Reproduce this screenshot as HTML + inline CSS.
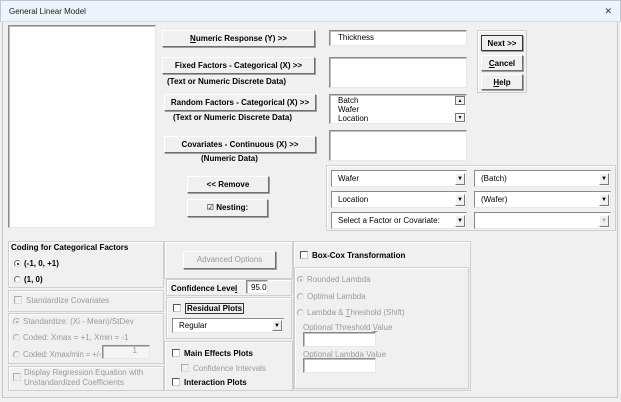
<!DOCTYPE html>
<html><head><meta charset="utf-8"><style>
*{box-sizing:border-box;margin:0;padding:0}
body{width:621px;height:402px;overflow:hidden;background:#f0f0f0;font-family:"Liberation Sans",Arial,sans-serif;font-size:8px;color:#000;position:relative}
.a{position:absolute}
.title{left:0;top:0;width:621px;height:22px;background:#eef4fb;border:1px solid #bcc8d4;border-bottom:1px solid #d8dde3}
.title span{position:absolute;left:8px;top:6px;font-size:8px;color:#222}
.title b{position:absolute;right:8px;top:5px;font-weight:normal;font-size:9px;color:#333}
.btn{background:#f0f0f0;border:1px solid;border-color:#fff #6e6e6e #6e6e6e #fff;box-shadow:1px 1px 0 #a0a0a0;text-align:center;font-weight:bold;font-size:8px;line-height:15px}
.box{background:#fff;border:1px solid;border-color:#8a8a8a #e8e8e8 #e8e8e8 #8a8a8a;box-shadow:inset 1px 1px 0 #c0c0c0}
.grp{border:1px solid #cfcfcf;box-shadow:inset 1px 1px 0 #fff}
.t{font-size:8px;white-space:nowrap}
.bd{font-weight:bold}
.dis{color:#9a9a9a}
.dd{background:#fff;border:1px solid;border-color:#8a8a8a #e8e8e8 #e8e8e8 #8a8a8a;padding:3px 0 0 6px;font-size:8px}
.arr{position:absolute;right:1px;top:2px;width:10px;height:12px;background:#f0f0f0;border:1px solid;border-color:#fff #777 #777 #fff;font-size:6px;text-align:center;line-height:11px}
.cb{display:inline-block;width:8px;height:8px;border:1px solid;border-color:#555 #ccc #ccc #555;background:#fff;vertical-align:-1px;margin-right:4px}
.cb.d{border-color:#aaa #ddd #ddd #aaa;background:#f0f0f0}
.rd{display:inline-block;width:7px;height:7px;border-radius:50%;border:1px solid;border-color:#666 #ddd #ddd #666;background:#fff;margin-right:3px;vertical-align:-1px;position:relative}
.rd.on::after{content:"";position:absolute;left:1.5px;top:1.5px;width:2px;height:2px;border-radius:50%;background:#000}
.dis .rd{border-color:#aaa #e4e4e4 #e4e4e4 #aaa;background:#f0f0f0}
.dis .rd.on::after{background:#999}
</style></head><body>
<div class="a title"><span>General Linear Model</span><b>✕</b></div>
<div class="a" style="left:2px;top:22px;width:616px;height:376px;border:1px solid #c8c8c8;border-top:none"></div>

<div class="a box" style="left:8px;top:25px;width:148px;height:203px"></div>

<div class="a btn" style="left:162px;top:30px;width:153px;height:17px"><u>N</u>umeric Response (Y) &gt;&gt;</div>
<div class="a btn" style="left:162px;top:57px;width:153px;height:17px">Fixed Factors - Categorical (X) &gt;&gt;</div>
<div class="a t bd" style="left:167px;top:77px">(Text or Numeric Discrete Data)</div>
<div class="a btn" style="left:164px;top:94px;width:152px;height:17px">Random Factors - Categorical (X) &gt;&gt;</div>
<div class="a t bd" style="left:173px;top:113px">(Text or Numeric Discrete Data)</div>
<div class="a btn" style="left:164px;top:136px;width:152px;height:17px">Covariates - Continuous (X) &gt;&gt;</div>
<div class="a t bd" style="left:201px;top:154px">(Numeric Data)</div>
<div class="a btn" style="left:187px;top:176px;width:82px;height:17px">&lt;&lt; Remove</div>
<div class="a btn" style="left:187px;top:199px;width:81px;height:18px;line-height:16px;font-weight:bold"><span style="font-weight:normal">☑</span> Nesting:</div>

<div class="a box" style="left:329px;top:30px;width:138px;height:16px;padding:2px 0 0 8px">Thickness</div>
<div class="a box" style="left:329px;top:57px;width:138px;height:31px"></div>
<div class="a box" style="left:329px;top:94px;width:138px;height:30px;padding:1px 0 0 8px;line-height:9px">Batch<br>Wafer<br>Location
<div class="a" style="right:1px;top:1px;width:10px;height:9px;border:1px solid #777;background:#f0f0f0;font-size:5px;text-align:center;line-height:8px">▲</div>
<div class="a" style="right:1px;bottom:1px;width:10px;height:9px;border:1px solid #777;background:#f0f0f0;font-size:5px;text-align:center;line-height:8px">▼</div></div>
<div class="a box" style="left:329px;top:130px;width:138px;height:31px"></div>

<div class="a grp" style="left:477px;top:30px;width:50px;height:63px"></div>
<div class="a btn" style="left:481px;top:35px;width:42px;height:16px;border:1px solid #333">Next &gt;&gt;</div>
<div class="a btn" style="left:481px;top:55px;width:42px;height:16px"><u>C</u>ancel</div>
<div class="a btn" style="left:481px;top:74px;width:42px;height:16px"><u>H</u>elp</div>

<div class="a grp" style="left:326px;top:165px;width:290px;height:66px"></div>
<div class="a dd" style="left:331px;top:170px;width:136px;height:17px">Wafer<div class="arr">▼</div></div>
<div class="a dd" style="left:474px;top:170px;width:137px;height:17px">(Batch)<div class="arr">▼</div></div>
<div class="a dd" style="left:331px;top:191px;width:136px;height:17px">Location<div class="arr">▼</div></div>
<div class="a dd" style="left:474px;top:191px;width:137px;height:17px">(Wafer)<div class="arr">▼</div></div>
<div class="a dd" style="left:331px;top:212px;width:136px;height:17px">Select a Factor or Covariate:<div class="arr">▼</div></div>
<div class="a dd" style="left:474px;top:212px;width:137px;height:17px"><div class="arr" style="color:#aaa">▼</div></div>

<!-- bottom left -->
<div class="a grp" style="left:8px;top:241px;width:156px;height:47px"></div>
<div class="a t bd" style="left:11px;top:243px">Coding for Categorical Factors</div>
<div class="a t bd" style="left:14px;top:259px"><span class="rd on"></span>(-1, 0, +1)</div>
<div class="a t bd" style="left:14px;top:275px"><span class="rd"></span>(1, 0)</div>
<div class="a grp" style="left:8px;top:290px;width:156px;height:22px"></div>
<div class="a t dis" style="left:14px;top:296px"><span class="cb d"></span>Standardize Covariates</div>
<div class="a grp" style="left:8px;top:313px;width:156px;height:51px"></div>
<div class="a t dis" style="left:13px;top:317px"><span class="rd on"></span>Standardize: (Xi - Mean)/StDev</div>
<div class="a t dis" style="left:13px;top:333px"><span class="rd"></span>Coded: Xmax = +1, Xmin = -1</div>
<div class="a t dis" style="left:13px;top:350px;letter-spacing:-0.2px"><span class="rd"></span>Coded: Xmax/min = +/-</div>
<div class="a box" style="left:102px;top:345px;width:48px;height:14px;text-align:right;padding-right:12px;color:#999;background:#f5f5f5">1</div>
<div class="a grp" style="left:8px;top:366px;width:156px;height:25px"></div>
<div class="a t dis" style="left:13px;top:373px"><span class="cb d"></span></div>
<div class="a t dis" style="left:24px;top:368px;line-height:10px">Display Regression Equation with<br>Unstandardized Coefficients</div>

<!-- middle -->
<div class="a grp" style="left:164px;top:241px;width:129px;height:38px"></div>
<div class="a btn dis" style="left:183px;top:251px;width:93px;height:18px;font-weight:normal;color:#999;line-height:16px">Advanced Options</div>
<div class="a grp" style="left:166px;top:279px;width:126px;height:17px"></div>
<div class="a t bd" style="left:171px;top:284px">Confidence Leve<u>l</u></div>
<div class="a box" style="left:246px;top:280px;width:22px;height:14px;padding:2px 0 0 4px">95.0</div>
<div class="a grp" style="left:166px;top:297px;width:126px;height:42px"></div>
<div class="a t bd" style="left:173px;top:304px"><span class="cb"></span><span style="border:1px solid #333;padding:0 1px">Residual Plots</span></div>
<div class="a dd" style="left:172px;top:318px;width:112px;height:15px;padding-top:2px">Regular<div class="arr" style="top:1px;height:11px">▼</div></div>
<div class="a grp" style="left:164px;top:341px;width:129px;height:50px"></div>
<div class="a t bd" style="left:172px;top:349px"><span class="cb"></span>Main Effects Plots</div>
<div class="a t dis" style="left:181px;top:364px"><span class="cb d"></span>Confidence Intervals</div>
<div class="a t bd" style="left:172px;top:378px"><span class="cb"></span>Interaction Plots</div>

<!-- right -->
<div class="a grp" style="left:293px;top:241px;width:178px;height:150px"></div>
<div class="a t bd" style="left:300px;top:251px"><span class="cb"></span>Box-Cox Transformation</div>
<div class="a grp" style="left:294px;top:267px;width:175px;height:122px"></div>
<div class="a t dis" style="left:297px;top:275px"><span class="rd on"></span>Rounded Lambda</div>
<div class="a t dis" style="left:297px;top:292px"><span class="rd"></span>Optimal Lambda</div>
<div class="a t dis" style="left:297px;top:308px"><span class="rd"></span>Lambda &amp; <u>T</u>hreshold (Shift)</div>
<div class="a t dis" style="left:303px;top:323px">Optional Threshold <u>V</u>alue</div>
<div class="a box" style="left:303px;top:332px;width:73px;height:15px"></div>
<div class="a t dis" style="left:303px;top:350px">Optional Lambda <u>V</u>alue</div>
<div class="a box" style="left:303px;top:358px;width:73px;height:15px"></div>
</body></html>
